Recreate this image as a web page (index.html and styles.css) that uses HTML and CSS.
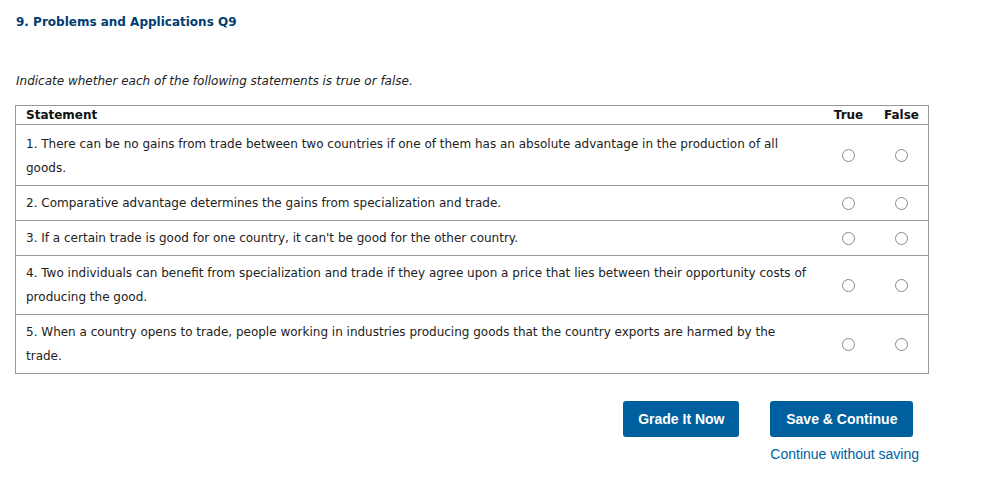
FILE: index.html
```html
<!DOCTYPE html>
<html>
<head>
<meta charset="utf-8">
<link rel="stylesheet" href="styles.css">
</head>
<body>
<div class="page">
  <h1 class="title">9. Problems and Applications Q9</h1>
  <p class="instr">Indicate whether each of the following statements is true or false.</p>
  <table class="tf">
    <thead>
      <tr><th class="stmt">Statement</th><th class="opt">True</th><th class="opt">False</th></tr>
    </thead>
    <tbody>
      <tr class="first"><td class="stmt">1. There can be no gains from trade between two countries if one of them has an absolute advantage in the production of all goods.</td><td class="opt"><span class="radio"></span></td><td class="opt"><span class="radio"></span></td></tr>
      <tr><td class="stmt">2. Comparative advantage determines the gains from specialization and trade.</td><td class="opt"><span class="radio"></span></td><td class="opt"><span class="radio"></span></td></tr>
      <tr><td class="stmt">3. If a certain trade is good for one country, it can't be good for the other country.</td><td class="opt"><span class="radio"></span></td><td class="opt"><span class="radio"></span></td></tr>
      <tr><td class="stmt">4. Two individuals can benefit from specialization and trade if they agree upon a price that lies between their opportunity costs of producing the good.</td><td class="opt"><span class="radio"></span></td><td class="opt"><span class="radio"></span></td></tr>
      <tr><td class="stmt">5. When a country opens to trade, people working in industries producing goods that the country exports are harmed by the trade.</td><td class="opt"><span class="radio"></span></td><td class="opt"><span class="radio"></span></td></tr>
    </tbody>
  </table>
  <div class="actions">
    <button class="btn grade">Grade It Now</button>
    <div class="save-group">
      <button class="btn save">Save &amp; Continue</button>
      <a class="link" href="#">Continue without saving</a>
    </div>
  </div>
</div>
</body>
</html>
```
FILE: styles.css
```css
html, body { margin: 0; padding: 0; background: #fff; }
body { font-family: "DejaVu Sans", Verdana, sans-serif; color: #222; }
.page { padding: 14px 0 0 15px; width: 914px; }
.title { margin: 0 0 0 1px; font-size: 12px; font-weight: bold; color: #003d73; line-height: 16px; }
.instr { margin: 43px 0 0 1px; font-size: 12px; font-style: italic; line-height: 16px; color: #222; }
.tf { margin-top: 16px; width: 914px; border-collapse: collapse; border: 1px solid #999; font-size: 12px; }
.tf th, .tf td { border-top: 1px solid #999; }
.tf th { font-weight: bold; text-align: left; height: 18px; padding: 0 10px; color: #111; }
.tf th.opt { text-align: center; padding: 0; width: 53px; }
.tf td.stmt { padding: 5px 10px; line-height: 24px; color: #222; }
.tf tr.first td.stmt { padding: 7px 10px 5px; }
.tf td.opt { text-align: center; vertical-align: middle; padding: 0; width: 53px; }
.radio { display: inline-block; width: 13px; height: 13px; border: 1px solid #888; border-radius: 50%; vertical-align: middle; box-sizing: border-box; }
.actions { display: flex; justify-content: flex-end; gap: 31px; margin-top: 27px; padding-right: 10px; }
.btn { font-family: "Liberation Sans", Arial, sans-serif; font-weight: bold; font-size: 14px; color: #fff; background: #005f9e; border: none; border-radius: 3px; height: 36px; padding: 0; white-space: nowrap; box-sizing: border-box; }
.grade { width: 116px; }
.save { width: 143px; }
.save-group { display: flex; flex-direction: column; align-items: flex-start; }
.link { font-family: "Liberation Sans", Arial, sans-serif; font-size: 14px; color: #005f9e; text-decoration: none; margin-top: 9px; }
```
